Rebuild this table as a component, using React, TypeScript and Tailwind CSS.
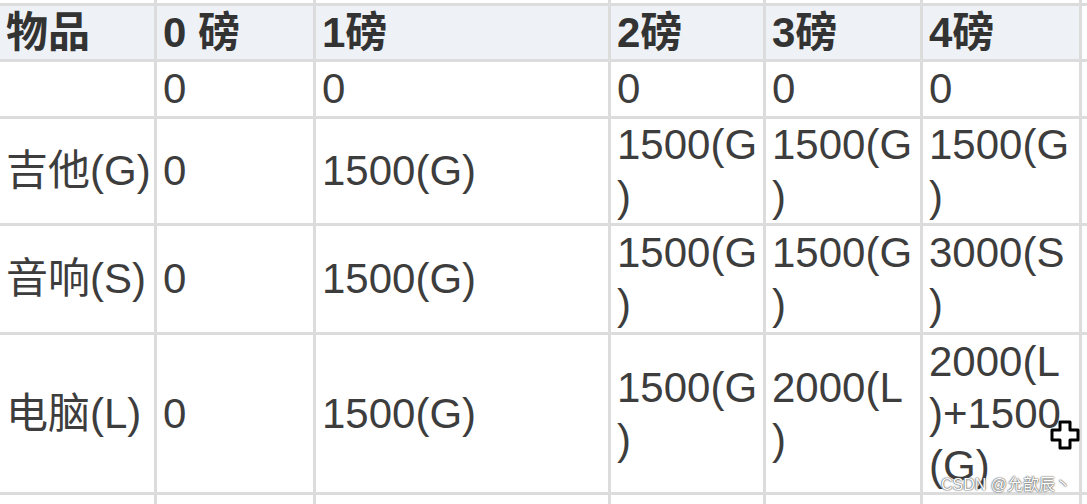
const headers = ['物品', '0 磅', '1磅', '2磅', '3磅', '4磅'];

// each cell is a list of lines (the source wraps them mid-word)
const rows: string[][][] = [
  [[''], ['0'], ['0'], ['0'], ['0'], ['0']],
  [['吉他(G)'], ['0'], ['1500(G)'], ['1500(G', ')'], ['1500(G', ')'], ['1500(G', ')']],
  [['音响(S)'], ['0'], ['1500(G)'], ['1500(G', ')'], ['1500(G', ')'], ['3000(S', ')']],
  [['电脑(L)'], ['0'], ['1500(G)'], ['1500(G', ')'], ['2000(L', ')'], ['2000(L', ')+1500', '(G)']],
];

function Cell({ lines, head }: { lines: string[]; head?: boolean }) {
  return (
    <div
      className={`flex items-center px-[6px] whitespace-nowrap overflow-hidden ${
        head ? 'bg-[#eef1f5] font-bold text-[#333333]' : 'bg-white text-[#3d3d3d]'
      }`}
    >
      <div>
        {lines.map((l, i) => (
          <div key={i}>{l}</div>
        ))}
      </div>
    </div>
  );
}

export default function App() {
  return (
    <div className="relative h-[504px] w-[1087px] overflow-hidden bg-white font-['Liberation_Sans','Noto_Sans_CJK_SC',sans-serif] text-[42px] leading-[52px]">
      <div className="grid h-[540px] grid-cols-[154px_156px_292px_152px_154px_156px_1fr] grid-rows-[3px_53px_54px_104px_106px_157px_1fr] gap-[3px] bg-[#dcdcdc]">
        {/* row cut off above */}
        {Array.from({ length: 7 }).map((_, i) => (
          <div key={'t' + i} className="bg-white" />
        ))}

        {headers.map((h) => (
          <Cell key={h} lines={[h]} head />
        ))}
        <div className="bg-white" />

        {rows.map((r, ri) => (
          <div key={ri} className="contents">
            {r.map((c, ci) => (
              <Cell key={ci} lines={c} />
            ))}
            <div className="bg-white" />
          </div>
        ))}

        {/* next row, cut off below */}
        {Array.from({ length: 7 }).map((_, i) => (
          <div key={'b' + i} className="bg-white" />
        ))}
      </div>

      {/* move cursor */}
      <svg className="absolute left-[1050px] top-[420px]" width="30" height="30" viewBox="0 0 30 30">
        <path
          d="M10 2h10v8h8v10h-8v8H10v-8H2V10h8z"
          fill="white"
          stroke="black"
          strokeWidth="3"
          strokeLinejoin="round"
        />
      </svg>

      {/* watermark */}
      <div className="absolute left-[941px] top-[475px] text-[16px] leading-[20px] text-white [text-shadow:0_0_2px_#444,0_0_1px_#444]">
        CSDN @允歆辰丶
      </div>
    </div>
  );
}
